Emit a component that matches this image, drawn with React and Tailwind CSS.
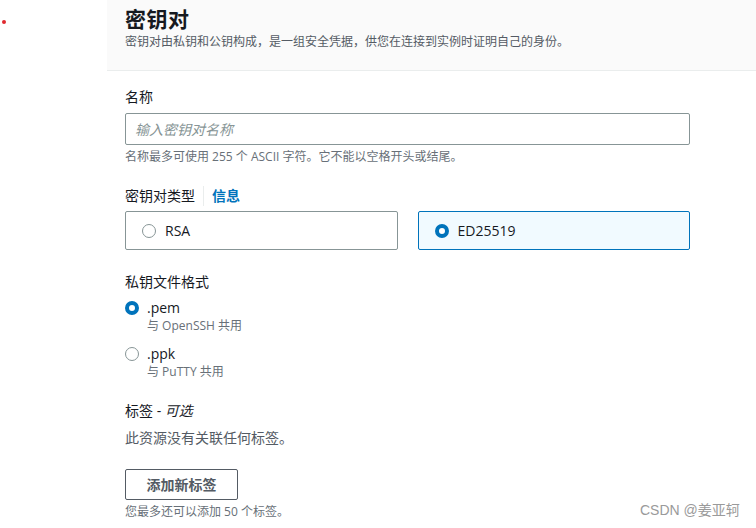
import React, { useState } from 'react';

const font = "font-['Open_Sans','Noto_Sans_CJK_SC',sans-serif]";

const Radio = ({ checked }) => (
  <span
    className={
      checked
        ? 'inline-block w-[14px] h-[14px] rounded-full border-[4px] border-[#0073bb] bg-white shrink-0'
        : 'inline-block w-[14px] h-[14px] rounded-full border-[1.5px] border-[#879596] bg-white shrink-0'
    }
  />
);

const App = () => {
  const [keyType, setKeyType] = useState('ed25519');
  const [format, setFormat] = useState('pem');

  return (
    <div className={`${font} relative flex w-[756px] h-[528px] bg-white text-[#16191f] overflow-hidden`}>
      {/* left rail */}
      <div className="w-[107px] shrink-0 relative">
        <span className="absolute left-[2px] top-[20px] w-[4px] h-[4px] rounded-full bg-[#e0282e]" />
      </div>

      <div className="flex-1 flex flex-col">
        <header className="h-[71px] bg-[#fafafa] border-b border-[#eaeded] pl-[18px]">
          <h1 className="mt-[5px] text-[21px] leading-[28px] font-bold tracking-[0.5px]">密钥对</h1>
          <p className="mt-[1px] text-[12px] leading-[16px] text-[#545b64]">
            密钥对由私钥和公钥构成，是一组安全凭据，供您在连接到实例时证明自己的身份。
          </p>
        </header>

        <div className="pl-[18px] w-[583px]">
          <label className="block mt-[16px] text-[14px] leading-[20px]">名称</label>
          <input
            className="mt-[6px] w-[565px] h-[32px] px-[9px] border border-[#879596] rounded-[2px] text-[14px] outline-none placeholder:italic placeholder:text-[#879596]"
            placeholder="输入密钥对名称"
          />
          <p className="mt-[4px] text-[12px] leading-[16px] text-[#687078]">
            名称最多可使用 255 个 ASCII 字符。它不能以空格开头或结尾。
          </p>

          <div className="mt-[21px] flex items-center text-[14px] leading-[20px]">
            <span>密钥对类型</span>
            <span className="mx-[8px] w-px h-[20px] bg-[#eaeded]" />
            <span className="font-bold text-[#0073bb]">信息</span>
          </div>

          <div className="mt-[5px] grid grid-cols-2 gap-[20px] w-[565px]">
            {[
              { id: 'rsa', label: 'RSA' },
              { id: 'ed25519', label: 'ED25519' },
            ].map((opt) => {
              const on = keyType === opt.id;
              return (
                <button
                  key={opt.id}
                  onClick={() => setKeyType(opt.id)}
                  className={
                    on
                      ? 'h-[39px] flex items-center gap-[9px] pl-[16px] border border-[#0073bb] bg-[#f1faff] rounded-[2px] text-[14px]'
                      : 'h-[39px] flex items-center gap-[9px] pl-[16px] border border-[#879596] bg-white rounded-[2px] text-[14px]'
                  }
                >
                  <Radio checked={on} />
                  <span>{opt.label}</span>
                </button>
              );
            })}
          </div>

          <p className="mt-[22px] text-[14px] leading-[20px]">私钥文件格式</p>

          {[
            { id: 'pem', label: '.pem', sub: '与 OpenSSH 共用', mt: 'mt-[6px]' },
            { id: 'ppk', label: '.ppk', sub: '与 PuTTY 共用', mt: 'mt-[10px]' },
          ].map((opt) => (
            <div key={opt.id} className={`${opt.mt} flex cursor-pointer`} onClick={() => setFormat(opt.id)}>
              <div className="h-[20px] flex items-center">
                <Radio checked={format === opt.id} />
              </div>
              <div className="ml-[8px]">
                <div className="text-[14px] leading-[20px]">{opt.label}</div>
                <div className="text-[12px] leading-[16px] text-[#687078]">{opt.sub}</div>
              </div>
            </div>
          ))}

          <p className="mt-[21px] text-[14px] leading-[20px]">
            标签 - <i>可选</i>
          </p>
          <p className="mt-[7px] text-[14px] leading-[20px] text-[#545b64]">此资源没有关联任何标签。</p>

          <button className="mt-[21px] block w-[113px] h-[31px] border border-[#545b64] rounded-[2px] text-[14px] font-bold text-[#545b64] bg-white">
            添加新标签
          </button>
          <p className="mt-[4px] text-[12px] leading-[16px] text-[#687078]">您最多还可以添加 50 个标签。</p>
        </div>
      </div>

      <span className="absolute left-[640px] top-[500px] text-[14px] leading-[20px] text-[#9a9a9a] font-['Liberation_Sans','Noto_Sans_CJK_SC',sans-serif]">
        CSDN @姜亚轲
      </span>
    </div>
  );
};

export default App;
